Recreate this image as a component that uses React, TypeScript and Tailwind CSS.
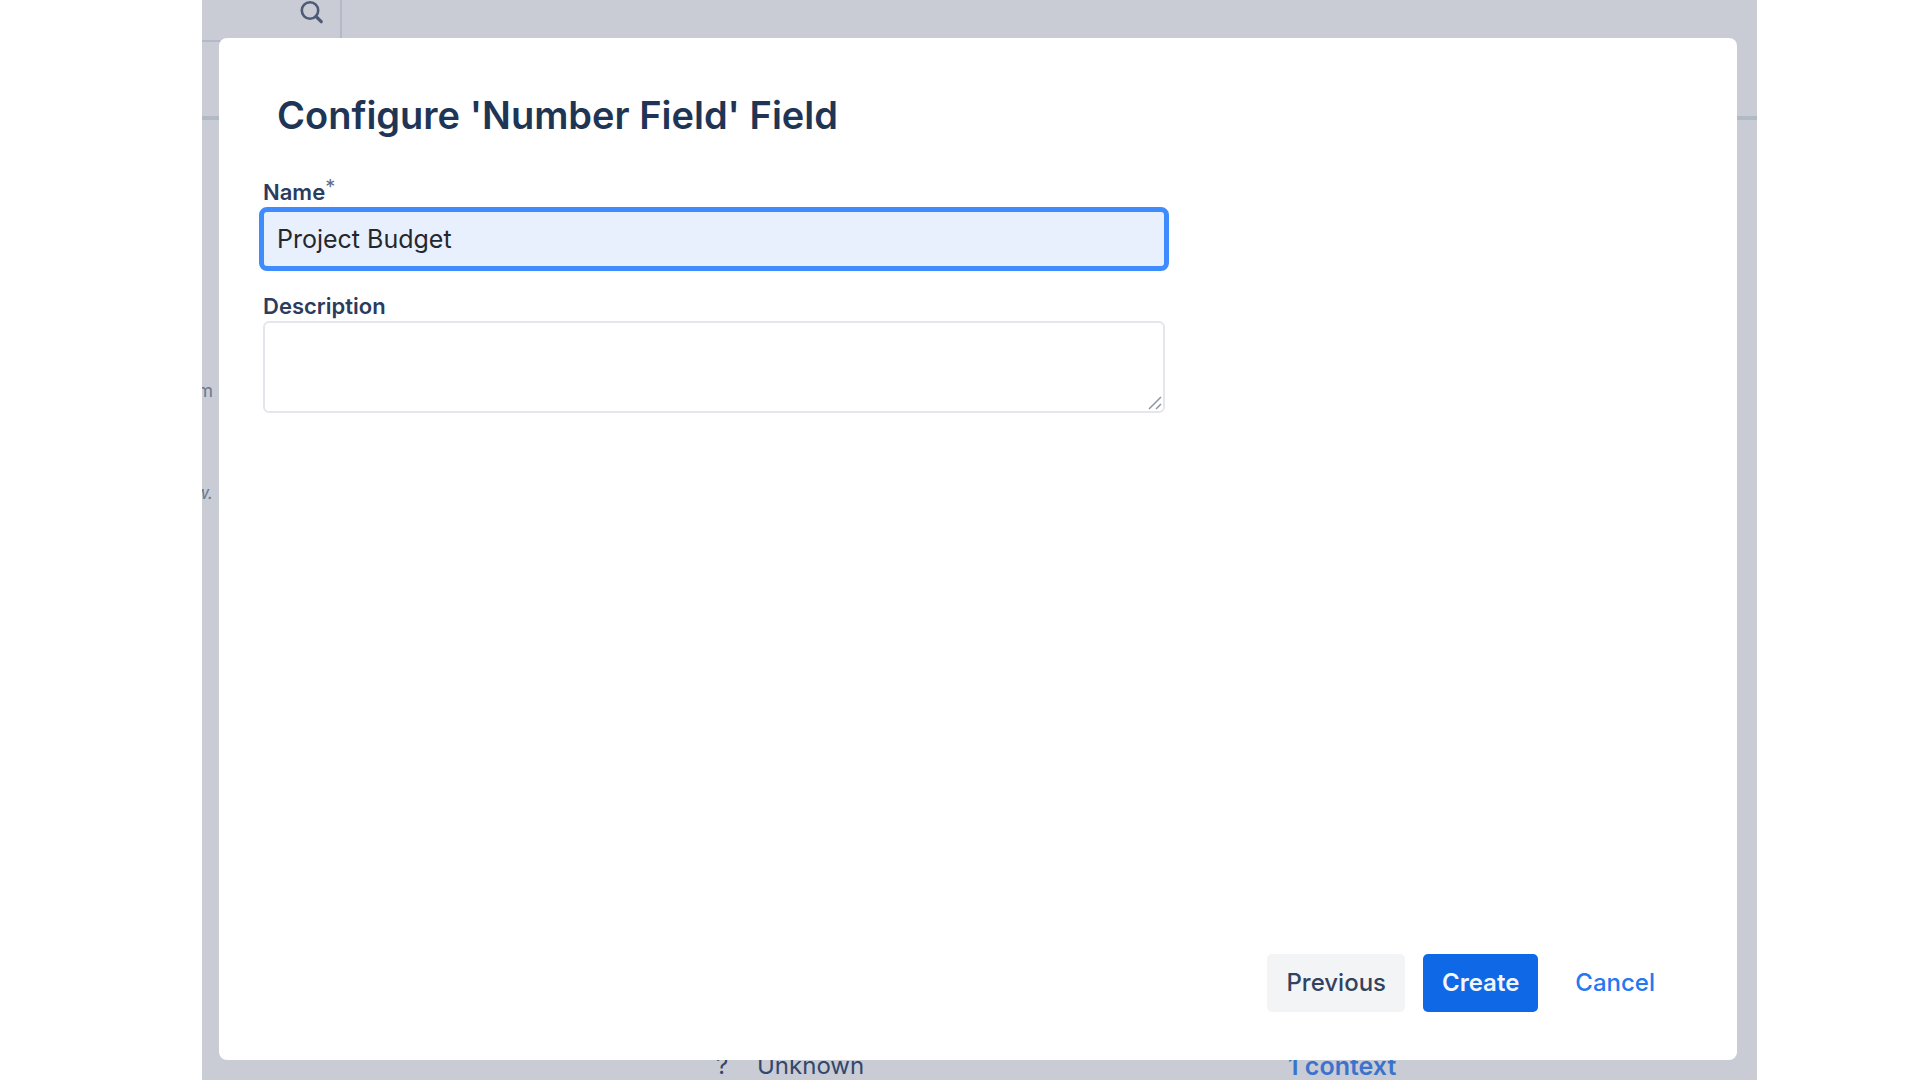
import type { ReactNode } from "react";

function BackgroundPage() {
  return (
    <div
      aria-hidden="true"
      className="flex h-full flex-col overflow-hidden bg-[#c9ccd4] text-[#33476b]"
    >
      <div className="flex h-[42px] shrink-0">
        <div className="flex w-[140px] justify-end border-r-2 border-b-2 border-[#b3bac7] pr-[17px]">
          <svg
            className="h-6 w-6 text-[#4d5b76]"
            viewBox="0 0 24 24"
            fill="none"
            stroke="currentColor"
          >
            <circle cx="11" cy="10.5" r="8.2" strokeWidth="2.6" />
            <path d="M17 16.5l5.2 5.2" strokeWidth="3.2" strokeLinecap="round" />
          </svg>
        </div>
      </div>
      <div className="h-[78px] shrink-0 border-b-4 border-[#b1b9c5]" />

      <div className="flex w-[11px] grow flex-col items-end pt-[257px] text-lg leading-7 text-[#6b7891]">
        <span>m</span>
        <span className="pt-[74px] italic">w.</span>
      </div>

      <div className="flex h-[30px] shrink-0 pl-[514px] text-2xl leading-8">
        <span className="w-[41px]">?</span>
        <span className="w-[531px]">Unknown</span>
        <span className="text-[25px] font-semibold whitespace-nowrap text-[#3b73cc]">
          1 context
        </span>
      </div>
    </div>
  );
}

function ResizeGrip() {
  return (
    <svg
      className="pointer-events-none absolute right-[3px] bottom-[3px] h-3.5 w-3.5 text-[#8d95a5]"
      viewBox="0 0 14 14"
      fill="none"
      stroke="currentColor"
      strokeWidth="1.5"
    >
      <path d="M1 13L13 1M8 13l5-5" />
    </svg>
  );
}

function Field({
  id,
  label,
  required,
  children,
}: {
  id: string;
  label: string;
  required?: boolean;
  children: ReactNode;
}) {
  return (
    <div className="flex flex-col">
      <label
        htmlFor={id}
        className="flex h-7 text-[22px] leading-[26px] font-semibold text-[#2b3c5e]"
      >
        {label}
        {required && <span className="-mt-1.5 text-xl font-normal text-[#5e6c84]">*</span>}
      </label>
      {children}
    </div>
  );
}

export default function App() {
  return (
    <div className="h-screen bg-white pr-[163px] pl-[202px] font-['Inter','Liberation_Sans',sans-serif]">
      <div className="relative h-full overflow-hidden">
        <BackgroundPage />

        <div className="absolute inset-0 flex pt-[38px] pr-5 pb-5 pl-[17px]">
          <div
            role="dialog"
            aria-labelledby="dialog-title"
            className="flex grow flex-col rounded-lg bg-white"
          >
            <h1
              id="dialog-title"
              className="px-[58px] pt-[50px] text-[38px] leading-[54px] font-semibold text-[#1f3556]"
            >
              Configure 'Number Field' Field
            </h1>

            <form
              id="field-form"
              className="flex w-full max-w-[946px] grow flex-col gap-[22px] pt-[37px] pl-11"
              onSubmit={(e) => e.preventDefault()}
            >
              <Field id="name" label="Name" required>
                <input
                  id="name"
                  type="text"
                  defaultValue="Project Budget"
                  className="-mx-1 h-16 rounded-lg border-[5px] border-[#3f8cff] bg-[#e8effd] px-[13px] text-[25px] text-[#25272c] outline-none"
                />
              </Field>
              <Field id="description" label="Description">
                <div className="relative flex">
                  <textarea
                    id="description"
                    className="h-[92px] w-full resize-none rounded-md border-2 border-[#e4e6eb] px-3 py-2 text-[25px] text-[#25272c] outline-none"
                  />
                  <ResizeGrip />
                </div>
              </Field>
            </form>

            <div className="flex justify-end gap-[18px] pr-[63px] pb-12 text-2xl">
              <button
                type="button"
                className="h-[58px] rounded-[5px] bg-[#f3f4f6] px-[19px] font-medium text-[#33435f]"
              >
                Previous
              </button>
              <button
                type="submit"
                form="field-form"
                className="h-[58px] rounded-[5px] bg-[#0f68e6] px-[19px] font-semibold text-[#f1f6ff]"
              >
                Create
              </button>
              <button type="button" className="h-[58px] px-[19px] font-medium text-[#2678f0]">
                Cancel
              </button>
            </div>
          </div>
        </div>
      </div>
    </div>
  );
}
